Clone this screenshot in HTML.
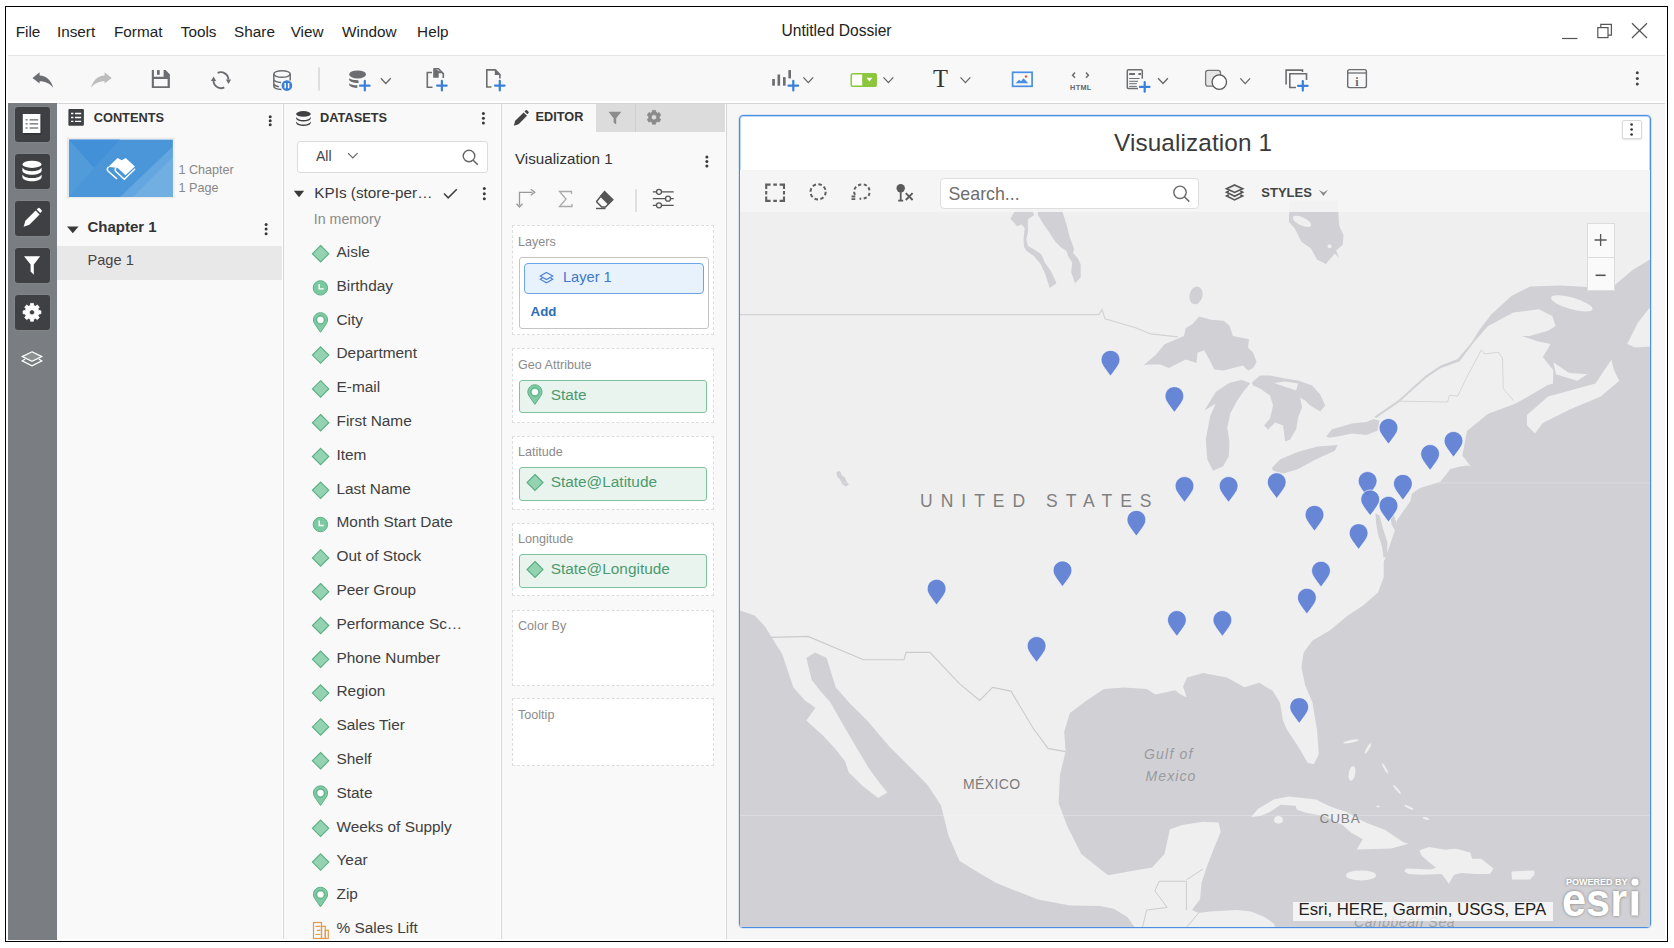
<!DOCTYPE html>
<html><head><meta charset="utf-8"><title>Untitled Dossier</title>
<style>*{box-sizing:border-box;margin:0;padding:0}
html,body{width:1674px;height:948px;overflow:hidden;background:#fff;font-family:"Liberation Sans",sans-serif;color:#333}
.a{position:absolute}
.t{position:absolute;white-space:nowrap}
.ov{position:absolute;left:0;top:0}
#win{position:absolute;left:5px;top:6px;width:1663px;height:936px;border:1px solid #000;pointer-events:none}
</style></head><body>
<div class="a" style="left:8px;top:55px;width:1657px;height:49px;background:#f8f8f8;border-top:1px solid #e4e4e4;border-bottom:1px solid #d6d6d6;box-shadow:inset 0 -2px 0 #fff"></div>
<div class="a" style="left:8px;top:103px;width:49px;height:837px;background:#7a7e82"></div>
<div class="a" style="left:15px;top:107px;width:35px;height:35px;border-radius:3px;background:#3f4043;box-shadow:0 0 0 0.5px #85888b"></div>
<div class="a" style="left:15px;top:154px;width:35px;height:35px;border-radius:3px;background:#3f4043;box-shadow:0 0 0 0.5px #85888b"></div>
<div class="a" style="left:15px;top:201px;width:35px;height:35px;border-radius:3px;background:#3f4043;box-shadow:0 0 0 0.5px #85888b"></div>
<div class="a" style="left:15px;top:248px;width:35px;height:35px;border-radius:3px;background:#3f4043;box-shadow:0 0 0 0.5px #85888b"></div>
<div class="a" style="left:15px;top:295px;width:35px;height:35px;border-radius:3px;background:#3f4043;box-shadow:0 0 0 0.5px #85888b"></div>
<div class="a" style="left:57px;top:104px;width:227px;height:835px;background:#f9f9f9;border-right:1px solid #d6d6d6;box-shadow:inset -1px 0 0 #fff"></div>
<div class="a" style="left:57px;top:246px;width:225px;height:34px;background:#e8e8e8"></div>
<div class="a" style="left:284px;top:104px;width:218px;height:835px;background:#f9f9f9;border-right:1px solid #d6d6d6;box-shadow:inset -1px 0 0 #fff"></div>
<div class="a" style="left:296.5px;top:140.5px;width:191px;height:32px;background:#fff;border:1px solid #dcdcdc;border-radius:3px"></div>
<div class="a" style="left:502px;top:104px;width:225px;height:835px;background:#f9f9f9;border-right:1px solid #d4d4d4;box-shadow:inset -1px 0 0 #fff"></div>
<div class="a" style="left:596px;top:104px;width:129px;height:28px;background:#dcdcdc"></div>
<div class="a" style="left:635px;top:104px;width:1px;height:28px;background:#cfcfcf"></div>
<div class="a" style="left:512px;top:225px;width:202px;height:110px;background:#fff;border:1px dashed #dddddd"></div>
<div class="a" style="left:512px;top:348px;width:202px;height:75px;background:#fff;border:1px dashed #dddddd"></div>
<div class="a" style="left:512px;top:436px;width:202px;height:74px;background:#fff;border:1px dashed #dddddd"></div>
<div class="a" style="left:512px;top:523px;width:202px;height:73px;background:#fff;border:1px dashed #dddddd"></div>
<div class="a" style="left:512px;top:610px;width:202px;height:76px;background:#fff;border:1px dashed #dddddd"></div>
<div class="a" style="left:512px;top:698px;width:202px;height:68px;background:#fff;border:1px dashed #dddddd"></div>
<div class="a" style="left:519px;top:257px;width:190px;height:72px;background:#fff;border:1px solid #c4c4c4;border-radius:3px"></div>
<div class="a" style="left:524px;top:262.5px;width:180px;height:31.5px;background:#e8f2fd;border:1px solid #6aa4ea;border-radius:4px"></div>
<div class="a" style="left:518.5px;top:379.5px;width:188.5px;height:33.5px;background:#eaf4ef;border:1px solid #7ec39e;border-radius:3px"></div>
<div class="a" style="left:518.5px;top:467px;width:188.5px;height:33.5px;background:#eaf4ef;border:1px solid #7ec39e;border-radius:3px"></div>
<div class="a" style="left:518.5px;top:554px;width:188.5px;height:33.5px;background:#eaf4ef;border:1px solid #7ec39e;border-radius:3px"></div>
<div class="a" style="left:727px;top:104px;width:938px;height:835px;background:#f6f6f6"></div>
<div class="a" style="left:739px;top:115px;width:912px;height:813px;border:1px solid #4a8fe3;box-shadow:inset 0 0 0 1px rgba(74,143,227,0.35),0 0 0 0.6px rgba(74,143,227,0.3);border-radius:4px;background:#fff;overflow:hidden"></div>
<svg class="a" style="left:740px;top:169.6px" width="910" height="757.4" viewBox="740 169.6 910 757.4"><rect x="700" y="150" width="1000" height="800" fill="#efefef"/><path d="M738.0 609.5L754.6 615.0L765.0 626.0L771.2 636.0L782.3 653.8L787.0 668.0L793.4 687.0L805.0 700.0L815.5 707.3L806.3 720.2L822.9 735.0L835.0 748.0L845.0 760.8L848.7 771.9L862.0 785.0L878.2 797.7L887.4 792.2L880.0 783.0L869.0 768.2L857.0 748.0L845.0 727.6L830.3 701.8L820.0 690.0L811.8 679.6L806.3 657.5L815.0 652.0L826.6 657.5L835.8 687.0L850.0 703.0L867.2 720.2L889.3 746.0L911.4 768.2L928.0 785.0L941.0 805.0L948.3 834.6L959.4 860.4L980.0 873.0L996.3 882.6L1038.0 899.2L1070.0 905.0L1100.0 905.6L1113.7 908.4L1127.4 916.6L1137.0 930.0L738.0 930.0Z" fill="#d1d1d5" />
<path d="M1065.6 751.2L1064.2 731.2L1069.9 712.7L1087.0 699.9L1104.0 688.5L1124.0 687.0L1146.8 688.5L1155.4 694.2L1175.3 689.9L1179.5 693.4L1186.7 697.0L1183.0 686.0L1187.0 677.1L1203.2 672.7L1226.8 677.1L1244.5 686.8L1259.3 682.3L1272.6 690.4L1280.0 702.3L1283.0 720.0L1286.4 728.4L1297.8 745.5L1307.8 762.6L1313.8 763.9L1318.8 753.7L1317.1 730.1L1312.5 702.3L1305.1 684.5L1301.4 666.8L1303.6 652.0L1312.5 640.2L1330.0 629.9L1347.5 615.3L1362.8 605.3L1378.0 592.0L1383.7 576.8L1383.7 561.6L1389.4 546.4L1395.0 529.3L1397.0 519.8L1410.3 500.8L1412.0 493.0L1420.0 487.6L1440.3 481.3L1450.4 468.6L1460.0 466.0L1469.0 465.0L1471.5 467.1L1462.4 455.0L1467.0 430.6L1488.1 413.4L1515.1 403.3L1530.3 394.9L1547.2 384.8L1553.0 383.0L1553.3 369.8L1542.8 356.6L1550.7 343.5L1537.5 340.8L1521.7 335.5L1529.6 335.5L1548.0 330.3L1555.6 325.7L1552.3 315.6L1538.7 308.8L1513.4 312.2L1488.1 325.7L1474.6 340.9L1459.4 361.1L1441.0 367.5L1426.0 377.5L1399.0 401.8L1376.0 417.8L1374.5 416.0L1398.4 399.8L1425.4 375.3L1440.6 365.0L1457.7 358.6L1471.2 342.6L1479.7 329.0L1491.5 313.9L1511.7 295.3L1530.3 286.0L1560.0 285.2L1587.6 286.7L1614.0 285.4L1632.5 269.6L1652.0 258.0L1652.0 930.0L1275.6 930.0L1274.2 923.5L1264.6 916.6L1250.9 911.1L1237.2 909.7L1209.7 911.1L1198.8 912.5L1191.9 909.7L1200.1 898.8L1201.5 882.3L1207.0 865.8L1213.9 848.0L1220.7 831.6L1218.7 822.0L1202.9 821.3L1182.3 824.7L1170.0 828.8L1167.2 841.2L1164.5 853.5L1152.1 867.2L1134.3 870.0L1108.2 874.8L1100.0 868.6L1081.3 853.7L1067.0 825.2L1058.5 802.5L1060.0 774.0Z" fill="#d1d1d5" />
<path d="M1652.0 305.0L1648.3 309.2L1637.8 322.3L1627.2 343.5L1635.0 347.0L1652.0 346.0Z" fill="#efefef" />
<ellipse cx="1571.8" cy="303" rx="21.5" ry="5.8" transform="rotate(16 1571.8 303)" fill="#efefef"/>
<path d="M1553.3 361.9L1569.2 372.5L1587.6 373.8L1577.0 380.4L1556.0 373.8Z" fill="#efefef" />
<path d="M1527.0 414.7L1548.0 396.2L1566.5 391.0L1595.5 383.0L1606.1 367.2L1611.4 359.3L1614.0 369.8L1619.3 380.4L1600.8 396.2L1569.2 409.4L1542.8 422.6L1534.9 433.2L1527.0 425.2Z" fill="#efefef" />
<path d="M1251.1 816.5L1258.2 808.4L1273.4 799.2L1288.7 796.2L1316.1 799.2L1326.2 804.3L1336.4 808.4L1346.5 811.4L1356.7 817.5L1366.8 822.6L1385.1 829.7L1403.4 841.9L1408.5 843.4L1391.2 848.0L1356.7 849.0L1362.8 838.8L1351.6 832.7L1342.5 824.6L1324.2 815.5L1305.9 812.4L1296.8 809.4L1295.8 805.3L1280.5 804.3L1270.4 811.4L1260.2 815.5Z" fill="#efefef" />
<ellipse cx="1278.5" cy="819.5" rx="4.5" ry="3.8" fill="#efefef"/>
<path d="M1404.0 870.8L1406.6 868.2L1430.8 869.0L1436.2 867.3L1429.0 861.9L1421.9 855.6L1419.2 850.2L1429.0 846.6L1445.2 849.3L1455.9 848.4L1470.3 852.0L1472.1 858.3L1481.0 858.3L1493.6 868.2L1490.0 873.5L1475.6 873.5L1461.3 872.6L1454.1 874.4L1448.8 883.4L1445.2 878.0L1441.6 873.5L1421.9 874.4L1408.4 873.5Z" fill="#efefef" />
<ellipse cx="1361" cy="875" rx="15" ry="5" fill="#efefef"/>
<path d="M1511.5 871.0L1534.0 870.0L1534.5 874.0L1530.0 879.0L1512.0 879.0Z" fill="#efefef" />
<ellipse cx="1351" cy="741" rx="8" ry="1.4" transform="rotate(-12 1351 741)" fill="#efefef"/>
<ellipse cx="1368" cy="748" rx="1.4" ry="6" transform="rotate(30 1368 748)" fill="#efefef"/>
<ellipse cx="1352" cy="773" rx="3.2" ry="7.5" transform="rotate(10 1352 773)" fill="#efefef"/>
<ellipse cx="1385" cy="768" rx="1.1" ry="6" transform="rotate(-30 1385 768)" fill="#efefef"/>
<ellipse cx="1397" cy="789" rx="1.1" ry="6" transform="rotate(-40 1397 789)" fill="#efefef"/>
<ellipse cx="1409" cy="807" rx="5" ry="1.1" transform="rotate(25 1409 807)" fill="#efefef"/>
<ellipse cx="1426" cy="818" rx="3.5" ry="1.1" transform="rotate(15 1426 818)" fill="#efefef"/>
<ellipse cx="1378" cy="806" rx="1.6" ry="0.9" transform="rotate(0 1378 806)" fill="#efefef"/>
<path d="M1143.4 365.0L1156.1 354.0L1164.5 343.9L1184.0 335.5L1185.7 327.9L1192.4 323.6L1199.2 316.0L1211.0 319.4L1223.6 320.3L1229.5 325.3L1232.9 335.5L1249.0 338.8L1248.1 347.3L1253.2 352.3L1256.6 361.6L1253.2 367.5L1248.1 370.0L1243.0 365.0L1223.6 370.0L1214.4 369.2L1209.3 359.1L1204.2 349.8L1197.5 352.3L1196.6 362.5L1185.7 359.1L1168.8 367.5L1160.3 364.2L1147.7 364.2Z" fill="#d1d1d5" />
<path d="M1204.4 410.1L1215.8 391.5L1228.7 382.9L1241.6 379.3L1250.3 382.9L1243.1 391.5L1237.3 400.1L1230.2 413.0L1227.3 427.3L1229.5 441.7L1228.7 456.0L1223.0 466.1L1213.0 470.4L1207.2 458.9L1205.8 438.8L1210.1 415.9L1215.8 403.0Z" fill="#d1d1d5" />
<path d="M1252.0 382.0L1260.0 375.0L1270.0 375.0L1285.1 378.0L1298.1 380.0L1312.1 385.0L1320.2 394.1L1325.2 405.1L1320.2 411.1L1310.1 405.1L1305.1 400.1L1300.1 397.1L1302.1 407.1L1298.1 417.1L1296.1 429.1L1290.1 439.1L1285.1 441.2L1283.1 425.1L1275.1 422.1L1268.1 429.1L1264.0 425.1L1270.0 418.1L1273.1 405.1L1270.0 395.1L1260.0 388.0L1253.0 385.0Z" fill="#d1d1d5" />
<path d="M1274.1 382.5L1285.1 381.0L1298.1 383.0L1296.1 390.0L1284.1 386.0Z" fill="#efefef" />
<path d="M1271.8 467.5L1280.4 458.9L1297.6 451.7L1317.6 446.0L1337.7 444.6L1334.8 450.3L1316.2 458.9L1297.6 468.9L1283.2 473.2L1273.2 470.4Z" fill="#d1d1d5" />
<path d="M1326.2 436.0L1332.0 428.8L1352.0 423.0L1366.4 421.6L1373.5 418.7L1379.3 420.2L1377.8 430.2L1366.4 434.5L1352.0 433.1L1337.7 436.0L1329.1 437.4Z" fill="#d1d1d5" />
<path d="M1036.0 195.0L1061.0 195.0L1062.7 212.1L1066.5 224.0L1069.3 235.4L1074.1 248.7L1073.1 252.5L1077.9 258.2L1080.7 263.9L1080.7 277.2L1075.0 282.9L1071.2 271.5L1072.2 262.0L1068.4 256.3L1066.5 250.6L1060.8 246.8L1055.1 241.1L1048.4 230.6L1043.7 224.0L1038.0 214.5Z" fill="#d1d1d5" />
<path d="M1010.4 218.3L1018.0 205.0L1031.3 205.0L1034.0 214.5L1027.8 219.2L1028.0 230.6L1026.3 239.2L1028.0 245.5L1035.0 249.5L1041.5 254.0L1044.8 262.0L1051.5 271.5L1056.5 282.9L1049.8 287.6L1045.0 273.0L1040.5 263.5L1034.0 255.5L1026.5 250.5L1024.0 246.0L1023.5 239.2L1024.7 227.8L1021.8 224.0L1017.1 225.9Z" fill="#d1d1d5" />
<ellipse cx="1196" cy="295" rx="6.5" ry="9" transform="rotate(15 1196 295)" fill="#d1d1d5"/>
<path d="M1289.6 200.0L1337.6 200.0L1339.1 225.1L1343.5 234.7L1342.8 244.3L1336.1 250.2L1339.1 257.6L1334.7 253.2L1325.8 263.5L1316.9 259.1L1311.0 248.0L1301.4 241.4L1294.8 228.1L1288.9 221.4Z" fill="#d1d1d5" />
<ellipse cx="1302" cy="221" rx="10" ry="4" transform="rotate(25 1302 221)" fill="#efefef"/>
<circle cx="1329.5" cy="245.8" r="2" fill="#efefef"/>
<path d="M836.5 471.5L840.0 470.5L842.0 475.0L845.0 477.0L846.5 481.0L849.0 484.0L846.0 486.0L842.0 483.5L840.0 479.0L837.0 476.0Z" fill="#d1d1d5" />
<path d="M1375.5 513.0L1379.5 515.0L1383.0 528.0L1387.5 542.0L1387.0 556.0L1383.5 557.0L1382.0 546.0L1378.0 534.0L1376.0 522.0Z" fill="#d1d1d5" />
<path d="M1390.0 513.0L1394.0 515.0L1398.5 528.0L1395.5 531.0L1391.5 524.0Z" fill="#d1d1d5" />
<path d="M740.0 314.2L1098.7 314.2L1102.0 309.2L1105.0 318.3L1135.5 327.4L1150.7 333.5L1178.0 336.5" fill="none" stroke="#d2d2d2" stroke-width="1.1" />
<path d="M771.0 637.0L808.0 636.0L863.5 659.3L904.0 659.3L906.0 652.0L929.9 652.0L959.4 683.3L979.7 700.0L992.6 687.0L1011.0 690.7L1033.0 727.6L1048.0 748.0L1065.6 751.2" fill="none" stroke="#cbcbcb" stroke-width="1.1" />
<path d="M1398.7 400.8L1447.6 401.6L1449.3 394.9L1457.7 395.7L1466.2 378.0L1481.4 349.3L1484.7 353.5L1498.2 351.8L1502.5 357.7L1503.3 388.1L1513.4 400.0" fill="none" stroke="#d6d6d6" stroke-width="1" />
<path d="M1142.5 927.0L1146.6 909.7L1167.2 907.0L1154.9 890.5L1159.0 880.9L1186.4 880.9L1186.4 909.7" fill="none" stroke="#cccccc" stroke-width="1" />
<path d="M1186.4 879.6L1202.9 868.6" fill="none" stroke="#cccccc" stroke-width="1" />
<path d="M1198.8 912.5L1186.4 927.0" fill="none" stroke="#cccccc" stroke-width="1" />
<path d="M740 482.5H1650M740 815H1650" stroke="#f6f6f6" stroke-width="0.8" opacity="0.35"/></svg>
<div class="t" style="left:920px;top:491px;font-size:17.5px;line-height:20px;color:#808080;letter-spacing:8.0px">UNITED STATES</div>
<div class="t" style="left:963px;top:776px;font-size:14px;line-height:17px;color:#7c7c7c;letter-spacing:0.4px">MÉXICO</div>
<div class="t" style="left:1319.5px;top:810px;font-size:13.5px;line-height:17px;color:#808080;letter-spacing:0.9px">CUBA</div>
<div class="t" style="left:1144px;top:746px;font-size:14px;line-height:17px;color:#9a9a9e;font-style:italic;letter-spacing:1.2px">Gulf of</div>
<div class="t" style="left:1145.5px;top:768px;font-size:14px;line-height:17px;color:#9a9a9e;font-style:italic;letter-spacing:1.1px">Mexico</div>
<svg class="a" style="left:0;top:0" width="1674" height="948"><g><path d="M1110.5 376.0C1108.5 373.4 1103.9 367.5 1102.1 364.0A9.4 9.4 0 1 1 1118.9 364.0C1117.1 367.5 1112.5 373.4 1110.5 376.0Z" fill="#6282d4" stroke="#fff" stroke-width="0.8" stroke-opacity="0.8" fill-opacity="0.97"/>
<path d="M1174.4 412.3C1172.4 409.7 1167.8 403.8 1166.0 400.3A9.4 9.4 0 1 1 1182.8 400.3C1181.0 403.8 1176.4 409.7 1174.4 412.3Z" fill="#6282d4" stroke="#fff" stroke-width="0.8" stroke-opacity="0.8" fill-opacity="0.97"/>
<path d="M1184.5 502.2C1182.5 499.6 1177.9 493.7 1176.1 490.2A9.4 9.4 0 1 1 1192.9 490.2C1191.1 493.7 1186.5 499.6 1184.5 502.2Z" fill="#6282d4" stroke="#fff" stroke-width="0.8" stroke-opacity="0.8" fill-opacity="0.97"/>
<path d="M1228.6 502.2C1226.6 499.6 1222.0 493.7 1220.2 490.2A9.4 9.4 0 1 1 1237.0 490.2C1235.2 493.7 1230.6 499.6 1228.6 502.2Z" fill="#6282d4" stroke="#fff" stroke-width="0.8" stroke-opacity="0.8" fill-opacity="0.97"/>
<path d="M1276.7 498.4C1274.7 495.8 1270.1 489.9 1268.3 486.4A9.4 9.4 0 1 1 1285.1 486.4C1283.3 489.9 1278.7 495.8 1276.7 498.4Z" fill="#6282d4" stroke="#fff" stroke-width="0.8" stroke-opacity="0.8" fill-opacity="0.97"/>
<path d="M1136.4 536.0C1134.4 533.4 1129.8 527.5 1128.0 524.0A9.4 9.4 0 1 1 1144.8 524.0C1143.0 527.5 1138.4 533.4 1136.4 536.0Z" fill="#6282d4" stroke="#fff" stroke-width="0.8" stroke-opacity="0.8" fill-opacity="0.97"/>
<path d="M1388.5 444.1C1386.5 441.5 1381.9 435.6 1380.1 432.1A9.4 9.4 0 1 1 1396.9 432.1C1395.1 435.6 1390.5 441.5 1388.5 444.1Z" fill="#6282d4" stroke="#fff" stroke-width="0.8" stroke-opacity="0.8" fill-opacity="0.97"/>
<path d="M1430.1 470.2C1428.1 467.6 1423.5 461.7 1421.7 458.2A9.4 9.4 0 1 1 1438.5 458.2C1436.7 461.7 1432.1 467.6 1430.1 470.2Z" fill="#6282d4" stroke="#fff" stroke-width="0.8" stroke-opacity="0.8" fill-opacity="0.97"/>
<path d="M1453.5 457.1C1451.5 454.5 1446.9 448.6 1445.1 445.1A9.4 9.4 0 1 1 1461.9 445.1C1460.1 448.6 1455.5 454.5 1453.5 457.1Z" fill="#6282d4" stroke="#fff" stroke-width="0.8" stroke-opacity="0.8" fill-opacity="0.97"/>
<path d="M1367.6 497.2C1365.6 494.6 1361.0 488.7 1359.2 485.2A9.4 9.4 0 1 1 1376.0 485.2C1374.2 488.7 1369.6 494.6 1367.6 497.2Z" fill="#6282d4" stroke="#fff" stroke-width="0.8" stroke-opacity="0.8" fill-opacity="0.97"/>
<path d="M1370.2 515.6C1368.2 513.0 1363.6 507.1 1361.8 503.6A9.4 9.4 0 1 1 1378.6 503.6C1376.8 507.1 1372.2 513.0 1370.2 515.6Z" fill="#6282d4" stroke="#fff" stroke-width="0.8" stroke-opacity="0.8" fill-opacity="0.97"/>
<path d="M1402.9 500.0C1400.9 497.4 1396.3 491.5 1394.5 488.0A9.4 9.4 0 1 1 1411.3 488.0C1409.5 491.5 1404.9 497.4 1402.9 500.0Z" fill="#6282d4" stroke="#fff" stroke-width="0.8" stroke-opacity="0.8" fill-opacity="0.97"/>
<path d="M1388.5 521.9C1386.5 519.3 1381.9 513.4 1380.1 509.9A9.4 9.4 0 1 1 1396.9 509.9C1395.1 513.4 1390.5 519.3 1388.5 521.9Z" fill="#6282d4" stroke="#fff" stroke-width="0.8" stroke-opacity="0.8" fill-opacity="0.97"/>
<path d="M1314.5 531.0C1312.5 528.4 1307.9 522.5 1306.1 519.0A9.4 9.4 0 1 1 1322.9 519.0C1321.1 522.5 1316.5 528.4 1314.5 531.0Z" fill="#6282d4" stroke="#fff" stroke-width="0.8" stroke-opacity="0.8" fill-opacity="0.97"/>
<path d="M1358.6 549.3C1356.6 546.7 1352.0 540.8 1350.2 537.3A9.4 9.4 0 1 1 1367.0 537.3C1365.2 540.8 1360.6 546.7 1358.6 549.3Z" fill="#6282d4" stroke="#fff" stroke-width="0.8" stroke-opacity="0.8" fill-opacity="0.97"/>
<path d="M1321.0 586.9C1319.0 584.3 1314.4 578.4 1312.6 574.9A9.4 9.4 0 1 1 1329.4 574.9C1327.6 578.4 1323.0 584.3 1321.0 586.9Z" fill="#6282d4" stroke="#fff" stroke-width="0.8" stroke-opacity="0.8" fill-opacity="0.97"/>
<path d="M1306.9 613.9C1304.9 611.3 1300.3 605.4 1298.5 601.9A9.4 9.4 0 1 1 1315.3 601.9C1313.5 605.4 1308.9 611.3 1306.9 613.9Z" fill="#6282d4" stroke="#fff" stroke-width="0.8" stroke-opacity="0.8" fill-opacity="0.97"/>
<path d="M936.6 604.9C934.6 602.3 930.0 596.4 928.2 592.9A9.4 9.4 0 1 1 945.0 592.9C943.2 596.4 938.6 602.3 936.6 604.9Z" fill="#6282d4" stroke="#fff" stroke-width="0.8" stroke-opacity="0.8" fill-opacity="0.97"/>
<path d="M1062.5 586.6C1060.5 584.0 1055.9 578.1 1054.1 574.6A9.4 9.4 0 1 1 1070.9 574.6C1069.1 578.1 1064.5 584.0 1062.5 586.6Z" fill="#6282d4" stroke="#fff" stroke-width="0.8" stroke-opacity="0.8" fill-opacity="0.97"/>
<path d="M1036.6 662.2C1034.6 659.6 1030.0 653.7 1028.2 650.2A9.4 9.4 0 1 1 1045.0 650.2C1043.2 653.7 1038.6 659.6 1036.6 662.2Z" fill="#6282d4" stroke="#fff" stroke-width="0.8" stroke-opacity="0.8" fill-opacity="0.97"/>
<path d="M1176.9 636.2C1174.9 633.6 1170.3 627.7 1168.5 624.2A9.4 9.4 0 1 1 1185.3 624.2C1183.5 627.7 1178.9 633.6 1176.9 636.2Z" fill="#6282d4" stroke="#fff" stroke-width="0.8" stroke-opacity="0.8" fill-opacity="0.97"/>
<path d="M1222.4 636.2C1220.4 633.6 1215.8 627.7 1214.0 624.2A9.4 9.4 0 1 1 1230.8 624.2C1229.0 627.7 1224.4 633.6 1222.4 636.2Z" fill="#6282d4" stroke="#fff" stroke-width="0.8" stroke-opacity="0.8" fill-opacity="0.97"/>
<path d="M1299.2 723.3C1297.2 720.7 1292.6 714.8 1290.8 711.3A9.4 9.4 0 1 1 1307.6 711.3C1305.8 714.8 1301.2 720.7 1299.2 723.3Z" fill="#6282d4" stroke="#fff" stroke-width="0.8" stroke-opacity="0.8" fill-opacity="0.97"/></g></svg>
<div class="a" style="left:740px;top:169.6px;width:910px;height:42.4px;background:rgba(246,246,246,0.88)"></div>
<div class="a" style="left:940.3px;top:177.9px;width:258.5px;height:31.5px;background:#fff;border:1px solid #dedede;border-radius:4px"></div>
<div class="a" style="left:1587px;top:222.5px;width:27.5px;height:68.5px;background:#fafafa;border:1px solid #dcdcdc"></div>
<div class="a" style="left:1587px;top:257px;width:27.5px;height:1px;background:#dcdcdc"></div>
<div class="a" style="left:1621.5px;top:119.7px;width:20px;height:19.5px;background:#fff;border:1px solid #dadada;border-radius:2px;box-shadow:0 1px 2px rgba(0,0,0,0.12)"></div>
<div class="a" style="left:741px;top:169.6px;width:908px;height:757.2px;overflow:hidden"><div class="t" style="left:613px;top:744.5px;font-size:14px;line-height:17px;color:#a2a2a6;font-style:italic;letter-spacing:0.6px">Caribbean Sea</div></div>
<div class="a" style="left:1293px;top:902.2px;width:260px;height:18.4px;background:rgba(255,255,255,0.75)"></div>
<svg class="ov" width="1674" height="948" viewBox="0 0 1674 948">
<path d="M1562 38.5h15.5" stroke="#555" stroke-width="1.2"/>
<rect x="1597.8" y="27.6" width="10.2" height="10" fill="none" stroke="#555" stroke-width="1.2"/>
<path d="M1600.8 27.6v-3.2h10.6v10.8h-3.4" fill="none" stroke="#555" stroke-width="1.2"/>
<path d="M1632 23.3l15 14.7M1647 23.3l-15 14.7" stroke="#555" stroke-width="1.2"/>
<path d="M32.5 77.9L39.6 72.3V75.6C46.5 75.9 51.2 80.4 53.2 87.8C49.8 83.6 45.5 81.3 39.6 81.3V83.5Z" fill="#6b6d70"/>
<path transform="translate(144.2 0) scale(-1 1)" d="M32.5 77.9L39.6 72.3V75.6C46.5 75.9 51.2 80.4 53.2 87.8C49.8 83.6 45.5 81.3 39.6 81.3V83.5Z" fill="#bdbdbd"/>
<path fill-rule="evenodd" d="M151.8 70.1H165.6L169.9 74.4V87.9H151.8ZM153.9 70.1H163.6V76.7H153.9ZM153.9 78.9H167.6V86.3H153.9Z" fill="#6b6d70"/>
<rect x="157" y="70.1" width="2.7" height="4.7" fill="#6b6d70"/>
<path d="M217.6 72.9A7.6 7.6 0 0 1 228.4 79.6" fill="none" stroke="#6b6d70" stroke-width="1.9"/>
<path d="M225.9 79.6H231.1L228.5 84Z" fill="#6b6d70"/>
<path d="M224.3 87.4A7.6 7.6 0 0 1 213.5 80.8" fill="none" stroke="#6b6d70" stroke-width="1.9"/>
<path d="M210.9 80.9H216.1L213.6 76.6Z" fill="#6b6d70"/>
<ellipse cx="282" cy="74" rx="8.2" ry="3.3" fill="none" stroke="#6b6d70" stroke-width="1.5"/>
<path d="M273.8 74V86C273.8 88 277 89.3 281.5 89.5M290.2 74V80.5M273.8 79.5C274.5 81.2 277.5 82.3 281 82.5M273.8 84.2C274.5 85.6 276.5 86.4 279 86.7" fill="none" stroke="#6b6d70" stroke-width="1.5"/>
<circle cx="286.9" cy="85.6" r="5.3" fill="#3a80d8"/>
<path d="M285.2 83V88.2M288.6 83V88.2" stroke="#fff" stroke-width="1.5"/>
<path d="M319 67.5V90.5" stroke="#cfcfcf" stroke-width="1.3"/>
<ellipse cx="357.6" cy="74.4" rx="8.4" ry="4" fill="#6b6d70"/>
<path d="M349.2 78.6C350 81.5 353.5 82.9 358.6 82.9L357.6 80.2C353.5 80.1 350.6 79.6 349.2 78.6Z" fill="#6b6d70"/>
<path d="M349.2 78.4V80.2C350.8 82 354 82.9 358.3 83.1L358.6 80.6C354 80.5 350.6 79.8 349.2 78.4Z" fill="#6b6d70"/>
<path d="M349.2 83.2V85.2C350.8 87 354 87.9 357.3 88L357.4 85.3C353.6 85.2 350.6 84.6 349.2 83.2Z" fill="#6b6d70"/>
<path d="M360.0 85.7H369.6M364.8 80.9V90.5" stroke="#3a80d8" stroke-width="2.2" stroke-linecap="round"/>
<path d="M380.90000000000003 78.30000000000001L385.8 83.5L390.7 78.30000000000001" fill="none" stroke="#666" stroke-width="1.3"/>
<path d="M432 72.5H427.3V87.2H432.5" fill="none" stroke="#6b6d70" stroke-width="1.6"/>
<path d="M434 68.8H438.5L443.3 73.6V78" fill="none" stroke="#6b6d70" stroke-width="1.6"/>
<path d="M433.2 68V77.8H438.7V73.2H443.5Z" fill="#6b6d70"/>
<path d="M437.09999999999997 85.6H446.7M441.9 80.8V90.39999999999999" stroke="#3a80d8" stroke-width="2.2" stroke-linecap="round"/>
<path d="M491.5 87H486.8V69.9H495.3L499.9 74.5V78.5" fill="none" stroke="#6b6d70" stroke-width="1.6"/>
<path d="M494.8 69.4V74.9H500.4Z" fill="#6b6d70"/>
<path d="M495.0 85.6H504.6M499.8 80.8V90.39999999999999" stroke="#3a80d8" stroke-width="2.2" stroke-linecap="round"/>
<rect x="772.2" y="79" width="2.699999999999932" height="6.700000000000003" fill="#6b6d70"/>
<rect x="777.5" y="74.5" width="2.6000000000000227" height="11.200000000000003" fill="#6b6d70"/>
<rect x="783" y="77.1" width="2.6000000000000227" height="8.600000000000009" fill="#6b6d70"/>
<rect x="788.4" y="70.1" width="2.6000000000000227" height="8.300000000000011" fill="#6b6d70"/>
<path d="M788.5 85.7H798.0999999999999M793.3 80.9V90.5" stroke="#3a80d8" stroke-width="2.2" stroke-linecap="round"/>
<path d="M803.4 77.4L808.3 82.6L813.1999999999999 77.4" fill="none" stroke="#666" stroke-width="1.3"/>
<rect x="851.2" y="73.7" width="25" height="12.5" rx="1.8" fill="#fff" stroke="#8cc63e" stroke-width="1.5"/>
<path d="M862.2 72.9H874.7A2.5 2.5 0 0 1 877 75.4V84.5A2.5 2.5 0 0 1 874.7 87H862.2Z" fill="#8cc63e"/>
<path d="M866.6 77.7H872.2L869.4 81.5Z" fill="#fff"/>
<path d="M883.5 77.4L888.4 82.6L893.3 77.4" fill="none" stroke="#666" stroke-width="1.3"/>
<text x="940.6" y="87.2" font-family="Liberation Serif" font-size="24.5" text-anchor="middle" fill="#333">T</text>
<path d="M960.5 77.4L965.4 82.6L970.3 77.4" fill="none" stroke="#666" stroke-width="1.3"/>
<rect x="1012.6" y="72.3" width="19.5" height="14" fill="none" stroke="#4a90e2" stroke-width="1.7"/>
<path d="M1015.6 83.2L1019 79.8L1021 81.3L1023.5 78.3L1028.4 83.2Z" fill="#4a90e2"/>
<circle cx="1026" cy="76.5" r="1.2" fill="#e8553e"/>
<path d="M1075 72.6L1072.6 75.2L1075 77.8M1086 72.6L1088.4 75.2L1086 77.8" fill="none" stroke="#6b6d70" stroke-width="1.5"/>
<text x="1080.8" y="89.8" font-family="Liberation Sans" font-weight="bold" font-size="7.3" text-anchor="middle" fill="#666" letter-spacing="0.3">HTML</text>
<path d="M1138 88.6H1128.3A1 1 0 0 1 1127.3 87.6V70.7A1 1 0 0 1 1128.3 69.7H1141.3A1 1 0 0 1 1142.3 70.7V78.7" fill="none" stroke="#6b6d70" stroke-width="1.5"/>
<path d="M1129.2 73.9H1135M1138.4 73.9H1141" stroke="#6b6d70" stroke-width="2"/>
<path d="M1129.2 78.5H1139.6M1129.2 81.3H1138M1129.2 83.7H1136.8M1129.2 86.4H1136.8" stroke="#6b6d70" stroke-width="1"/>
<path d="M1139.9 86.9H1149.5M1144.7 82.10000000000001V91.7" stroke="#3a80d8" stroke-width="2.2" stroke-linecap="round"/>
<path d="M1158.1 78.30000000000001L1163 83.5L1167.9 78.30000000000001" fill="none" stroke="#666" stroke-width="1.3"/>
<rect x="1205.6" y="70.3" width="14.9" height="15.9" rx="2.5" fill="#e6e6e6" stroke="#777" stroke-width="1.3"/>
<circle cx="1219.3" cy="82.1" r="7.2" fill="#fff" stroke="#555" stroke-width="1.3"/>
<path d="M1240.3 78.4L1245.2 83.6L1250.1000000000001 78.4" fill="none" stroke="#666" stroke-width="1.3"/>
<path d="M1286.1 84.5V70.1H1302.5V72" fill="none" stroke="#6b6d70" stroke-width="1.6"/>
<path d="M1296 87.5H1289.8V73.8H1306.5V80" fill="none" stroke="#6b6d70" stroke-width="1.6"/>
<path d="M1298.0 85.8H1307.6M1302.8 81.0V90.6" stroke="#3a80d8" stroke-width="2.2" stroke-linecap="round"/>
<rect x="1347.7" y="69.6" width="18.7" height="18" rx="1.8" fill="none" stroke="#6b6d70" stroke-width="1.4"/>
<path d="M1347.7 73H1366.4" stroke="#6b6d70" stroke-width="1.3"/>
<text x="1357" y="86.3" font-family="Liberation Serif" font-size="12" font-weight="bold" text-anchor="middle" fill="#6b6d70">i</text>
<circle cx="1637.3" cy="72.8" r="1.5" fill="#444"/>
<circle cx="1637.3" cy="78.5" r="1.5" fill="#444"/>
<circle cx="1637.3" cy="84.1" r="1.5" fill="#444"/>
<rect x="24" y="115.5" width="17.5" height="19" fill="#222" opacity="0.45"/>
<rect x="22.8" y="114" width="17.6" height="19" fill="#fff"/>
<path d="M25.6 119.9H27.6M29.6 119.9H38.2" stroke="#3f4044" stroke-width="1"/>
<path d="M25.6 123.9H27.6M29.6 123.9H38.2" stroke="#3f4044" stroke-width="1"/>
<path d="M25.6 128H27.6M29.6 128H38.2" stroke="#3f4044" stroke-width="1"/>
<g fill="#fff">
<ellipse cx="32" cy="164.3" rx="9.6" ry="3.6"/>
<path d="M22.4 167.6C23.5 170 27.3 171.2 32 171.2S40.5 170 41.6 167.6V171C40.5 173.5 36.7 174.7 32 174.7S23.5 173.5 22.4 171Z"/>
<path d="M22.4 174.4C23.5 176.8 27.3 178 32 178S40.5 176.8 41.6 174.4V177.5C40.5 180 36.7 181.2 32 181.2S23.5 180 22.4 177.5Z"/>
</g>
<path d="M23.6 226.8L25.4 220.8L35.6 210.6L39.6 214.6L29.4 224.8Z" fill="#fff"/>
<path d="M36.6 209.6L38 208.3A1.3 1.3 0 0 1 39.8 208.3L41.5 210A1.3 1.3 0 0 1 41.5 211.8L40.3 213.1Z" fill="#fff"/>
<path d="M24 256.3H40.2L33.8 264.4V274.7L30.6 271.6V264.4Z" fill="#fff"/>
<path fill-rule="evenodd" stroke="#fff" stroke-width="0.8" stroke-linejoin="round" d="M38.67 310.53L40.89 310.87L40.89 313.73L38.67 314.07L37.97 315.76L39.30 317.57L37.27 319.60L35.46 318.27L33.77 318.97L33.43 321.19L30.57 321.19L30.23 318.97L28.54 318.27L26.73 319.60L24.70 317.57L26.03 315.76L25.33 314.07L23.11 313.73L23.11 310.87L25.33 310.53L26.03 308.84L24.70 307.03L26.73 305.00L28.54 306.33L30.23 305.63L30.57 303.41L33.43 303.41L33.77 305.63L35.46 306.33L37.27 305.00L39.30 307.03L37.97 308.84ZM34.6 312.3A2.6 2.6 0 1 0 29.4 312.3A2.6 2.6 0 1 0 34.6 312.3Z" fill="#fff"/>
<path d="M32 351.8L41.8 356.6L32 361.4L22.2 356.6Z" fill="#8e9194" stroke="#fff" stroke-width="1.2"/>
<path d="M25.2 359L22.2 360.9L32 365.8L41.8 360.9L38.8 359" fill="none" stroke="#fff" stroke-width="1.2"/>
<rect x="68.4" y="109.1" width="15.5" height="16.7" rx="1" fill="#3f4044"/>
<path d="M71 113.5H73.4M75 113.5H81.2" stroke="#fff" stroke-width="1.3"/>
<path d="M71 117.5H73.4M75 117.5H81.2" stroke="#fff" stroke-width="1.3"/>
<path d="M71 121.4H73.4M75 121.4H81.2" stroke="#fff" stroke-width="1.3"/>
<circle cx="270.2" cy="116.80" r="1.5" fill="#3a3a3a"/>
<circle cx="270.2" cy="120.80" r="1.5" fill="#3a3a3a"/>
<circle cx="270.2" cy="124.80" r="1.5" fill="#3a3a3a"/>
<rect x="67.5" y="138.3" width="106.5" height="59.5" fill="none" stroke="#e6e6e6" stroke-width="1"/>
<rect x="68.9" y="139.6" width="104" height="57.4" fill="#4a96d9"/>
<path d="M68.9 139.6L94 168L120 139.6Z" fill="#3f8dd6" opacity="0.7"/>
<path d="M68.9 139.6L94 168L68.9 197Z" fill="#5aa0dc" opacity="0.5"/>
<path d="M120 197L172.9 146.5V197Z" fill="#7ab5e4" opacity="0.55"/>
<path d="M133 197L172.9 157V197Z" fill="#8abfe8" opacity="0.35"/>
<path d="M107.2 168L117.6 157.9L121.8 160.3L125.7 157.9L134.9 166.4L125.5 175.3L117.8 168L110 167Z" fill="#fff"/>
<path d="M108 167.5Q106.3 169.3 108.2 171.2L116.6 178.6M115.8 168.3Q114.2 170 116.2 171.8L124.3 179.3L134.7 169.3" fill="none" stroke="#fff" stroke-width="1.4" stroke-linecap="round"/>
<path d="M67 226.4H78.6L72.8 233.2Z" fill="#3a3a3a"/>
<circle cx="266.1" cy="224.40" r="1.5" fill="#3a3a3a"/>
<circle cx="266.1" cy="229.05" r="1.5" fill="#3a3a3a"/>
<circle cx="266.1" cy="233.70" r="1.5" fill="#3a3a3a"/>
<ellipse cx="303.45" cy="113.9" rx="7.35" ry="2.8" fill="#3f4044"/>
<path d="M296.1 116.9C297 119 300 120 303.45 120S310 119 310.8 116.9V118.6C310 120.8 307 121.6 303.45 121.6S297 120.8 296.1 118.6Z" fill="#3f4044"/>
<path d="M296.1 121.4C297 123.5 300 124.5 303.45 124.5S310 123.5 310.8 121.4V123.1C310 125.3 307 126.1 303.45 126.1S297 125.3 296.1 123.1Z" fill="#3f4044"/>
<circle cx="483.4" cy="113.50" r="1.5" fill="#3a3a3a"/>
<circle cx="483.4" cy="118.25" r="1.5" fill="#3a3a3a"/>
<circle cx="483.4" cy="123.00" r="1.5" fill="#3a3a3a"/>
<path d="M348 153.2L352.8 158L357.6 153.2" fill="none" stroke="#666" stroke-width="1.2"/>
<circle cx="469" cy="156" r="5.8" fill="none" stroke="#666" stroke-width="1.4"/>
<path d="M473.2 160.2L477.8 164.8" stroke="#666" stroke-width="1.5"/>
<path d="M293.8 190.8H304.2L299 197.2Z" fill="#3a3a3a"/>
<path d="M444 193.5L448.2 197.9L456.8 189.2" fill="none" stroke="#444" stroke-width="1.6"/>
<circle cx="484.3" cy="188.50" r="1.5" fill="#3a3a3a"/>
<circle cx="484.3" cy="193.65" r="1.5" fill="#3a3a3a"/>
<circle cx="484.3" cy="198.80" r="1.5" fill="#3a3a3a"/>
<path d="M320.6 245.5L328.8 253.7L320.6 261.9L312.40000000000003 253.7Z" fill="#94d3b1" stroke="#5aae80" stroke-width="1.1"/>
<circle cx="320.4" cy="287.9" r="7.2" fill="#7bc9a0" stroke="#5fb386" stroke-width="1"/>
<path d="M319.2 284.0V288.9H323.7" fill="none" stroke="#fff" stroke-width="1.4"/>
<path d="M320.5 332.29999999999995L314.6 323.7A7.1 7.1 0 1 1 326.4 323.7Z" fill="#82c9a5" stroke="#5bb386" stroke-width="1"/>
<circle cx="320.5" cy="319.9" r="4.3" fill="none" stroke="#5bb386" stroke-width="1"/>
<circle cx="320.5" cy="319.9" r="3.1" fill="#fff"/>
<path d="M320.6 346.9L328.8 355.09999999999997L320.6 363.29999999999995L312.40000000000003 355.09999999999997Z" fill="#94d3b1" stroke="#5aae80" stroke-width="1.1"/>
<path d="M320.6 380.7L328.8 388.9L320.6 397.09999999999997L312.40000000000003 388.9Z" fill="#94d3b1" stroke="#5aae80" stroke-width="1.1"/>
<path d="M320.6 414.5L328.8 422.7L320.6 430.9L312.40000000000003 422.7Z" fill="#94d3b1" stroke="#5aae80" stroke-width="1.1"/>
<path d="M320.6 448.3L328.8 456.5L320.6 464.7L312.40000000000003 456.5Z" fill="#94d3b1" stroke="#5aae80" stroke-width="1.1"/>
<path d="M320.6 482.09999999999997L328.8 490.29999999999995L320.6 498.49999999999994L312.40000000000003 490.29999999999995Z" fill="#94d3b1" stroke="#5aae80" stroke-width="1.1"/>
<circle cx="320.4" cy="524.4999999999999" r="7.2" fill="#7bc9a0" stroke="#5fb386" stroke-width="1"/>
<path d="M319.2 520.5999999999999V525.4999999999999H323.7" fill="none" stroke="#fff" stroke-width="1.4"/>
<path d="M320.6 549.6999999999999L328.8 557.9L320.6 566.1L312.40000000000003 557.9Z" fill="#94d3b1" stroke="#5aae80" stroke-width="1.1"/>
<path d="M320.6 583.5L328.8 591.7L320.6 599.9000000000001L312.40000000000003 591.7Z" fill="#94d3b1" stroke="#5aae80" stroke-width="1.1"/>
<path d="M320.6 617.3L328.8 625.5L320.6 633.7L312.40000000000003 625.5Z" fill="#94d3b1" stroke="#5aae80" stroke-width="1.1"/>
<path d="M320.6 651.0999999999999L328.8 659.3L320.6 667.5L312.40000000000003 659.3Z" fill="#94d3b1" stroke="#5aae80" stroke-width="1.1"/>
<path d="M320.6 684.8999999999999L328.8 693.0999999999999L320.6 701.3L312.40000000000003 693.0999999999999Z" fill="#94d3b1" stroke="#5aae80" stroke-width="1.1"/>
<path d="M320.6 718.6999999999998L328.8 726.8999999999999L320.6 735.0999999999999L312.40000000000003 726.8999999999999Z" fill="#94d3b1" stroke="#5aae80" stroke-width="1.1"/>
<path d="M320.6 752.4999999999999L328.8 760.6999999999999L320.6 768.9L312.40000000000003 760.6999999999999Z" fill="#94d3b1" stroke="#5aae80" stroke-width="1.1"/>
<path d="M320.5 805.5L314.6 796.9A7.1 7.1 0 1 1 326.4 796.9Z" fill="#82c9a5" stroke="#5bb386" stroke-width="1"/>
<circle cx="320.5" cy="793.1" r="4.3" fill="none" stroke="#5bb386" stroke-width="1"/>
<circle cx="320.5" cy="793.1" r="3.1" fill="#fff"/>
<path d="M320.6 820.0999999999999L328.8 828.3L320.6 836.5L312.40000000000003 828.3Z" fill="#94d3b1" stroke="#5aae80" stroke-width="1.1"/>
<path d="M320.6 853.8999999999999L328.8 862.0999999999999L320.6 870.3L312.40000000000003 862.0999999999999Z" fill="#94d3b1" stroke="#5aae80" stroke-width="1.1"/>
<path d="M320.5 906.8999999999999L314.6 898.2999999999998A7.1 7.1 0 1 1 326.4 898.2999999999998Z" fill="#82c9a5" stroke="#5bb386" stroke-width="1"/>
<circle cx="320.5" cy="894.4999999999999" r="4.3" fill="none" stroke="#5bb386" stroke-width="1"/>
<circle cx="320.5" cy="894.4999999999999" r="3.1" fill="#fff"/>
<g fill="none" stroke="#e09a48" stroke-width="1.2">
<rect x="313.5" y="922.5" width="8" height="16"/><rect x="321.5" y="926.3" width="3.8" height="12.2"/><rect x="325.3" y="930.3" width="3" height="8.2"/>
<path d="M315.5 926.3H320.5M317 930.4H320.5M315.5 934.5H320.5"/>
</g>
<path d="M513.8 125.8L515.2 120.8L523.6 112.4L527 115.8L518.6 124.2Z" fill="#444"/>
<path d="M524.5 111.5L525.7 110.3A1 1 0 0 1 527.1 110.3L528.5 111.7A1 1 0 0 1 528.5 113.1L527.3 114.3Z" fill="#444"/>
<path d="M608.5 111.8H621.3L616.2 118.3V124.6L613.6 122.4V118.3Z" fill="#8c8c8c"/>
<path fill-rule="evenodd" stroke="#8a8a8a" stroke-width="0.8" stroke-linejoin="round" d="M652.13 112.34L652.47 110.47L655.53 110.47L655.87 112.34L657.36 113.20L659.15 112.56L660.68 115.21L659.23 116.44L659.23 118.16L660.68 119.39L659.15 122.04L657.36 121.40L655.87 122.26L655.53 124.13L652.47 124.13L652.13 122.26L650.64 121.40L648.85 122.04L647.32 119.39L648.77 118.16L648.77 116.44L647.32 115.21L648.85 112.56L650.64 113.20ZM656.7 117.3A2.7 2.7 0 1 0 651.3 117.3A2.7 2.7 0 1 0 656.7 117.3Z" fill="#8a8a8a"/>
<circle cx="706.9" cy="156.90" r="1.5" fill="#3a3a3a"/>
<circle cx="706.9" cy="161.45" r="1.5" fill="#3a3a3a"/>
<circle cx="706.9" cy="166.00" r="1.5" fill="#3a3a3a"/>
<path d="M519.5 205.5V192.3H532.5" fill="none" stroke="#999" stroke-width="1.3"/>
<path d="M530.8 189.3L534.8 192.3L530.8 195.3M516.5 203.8L519.5 207L522.5 203.8" fill="none" stroke="#999" stroke-width="1.3"/>
<path d="M571.5 194V191.5H559.5L566 199L559.5 206.5H572V204" fill="none" stroke="#aaa" stroke-width="1.3"/>
<path d="M604.5 191.5L612.8 199.8L605.5 207.1H601.8L597 202.3A1 1 0 0 1 597 200.9Z" fill="none" stroke="#555" stroke-width="1.5"/>
<path d="M604.5 191.5L612.8 199.8L608 204.6L599.7 196.3Z" fill="#555"/>
<path d="M596 208.5H605.5" stroke="#555" stroke-width="1.4"/>
<path d="M636 189.2V212" stroke="#cfcfcf" stroke-width="1.2"/>
<g fill="none" stroke="#555" stroke-width="1.3">
<path d="M652.8 191.8H656.4M661.6 191.8H673.7M652.8 198.7H665.4M670.6 198.7H673.7M652.8 205.3H656.4M661.6 205.3H673.7"/>
<circle cx="659" cy="191.8" r="2.5" fill="#f9f9f9"/><circle cx="668" cy="198.7" r="2.5" fill="#f9f9f9"/><circle cx="659" cy="205.3" r="2.5" fill="#f9f9f9"/>
</g>
<path d="M546.5 272.5L552.8 276L546.5 279.5L540.2 276Z" fill="none" stroke="#4a84cc" stroke-width="1.1"/>
<path d="M542.6 277.8L540.2 279.2L546.5 282.8L552.8 279.2L550.4 277.8" fill="none" stroke="#4a84cc" stroke-width="1.1"/>
<path d="M534.9 404.4L529.0 395.8A7.1 7.1 0 1 1 540.8 395.8Z" fill="#82c9a5" stroke="#5bb386" stroke-width="1"/>
<circle cx="534.9" cy="392" r="4.3" fill="none" stroke="#5bb386" stroke-width="1"/>
<circle cx="534.9" cy="392" r="3.1" fill="#fff"/>
<path d="M535 474.5L543 482.5L535 490.5L527 482.5Z" fill="#94d3b1" stroke="#5aae80" stroke-width="1.1"/>
<path d="M535 561.5L543 569.5L535 577.5L527 569.5Z" fill="#94d3b1" stroke="#5aae80" stroke-width="1.1"/>
<g fill="none" stroke="#606060" stroke-width="2" stroke-dasharray="3.2 2.4">
<circle cx="818.1" cy="191.8" r="7.6" stroke-dasharray="3.6 2.37"/>
<path d="M855 195C852 189 857 184.5 862.5 184.5C868 184.5 870 189 869.5 193C869 197.5 864 199.5 859.5 198.5"/>
</g>
<path d="M851.5 196.5H855.3M851.5 199.2H855.3" stroke="#606060" stroke-width="1.8"/>
<circle cx="900.7" cy="188.3" r="4.2" fill="#5a5a5a"/>
<path d="M900.7 191V200.6M898.2 200.6H903.2" stroke="#5a5a5a" stroke-width="1.8"/>
<path d="M905.8 193.2L912.6 200M912.6 193.2L905.8 200" stroke="#5a5a5a" stroke-width="1.9"/>
<path d="M766.2 189V184.6H770.6M779.6 184.6H784V189M784 196.5V200.9H779.6M770.6 200.9H766.2V196.5M773.3 184.6H776.9M773.3 200.9H776.9M766.2 190.9V194.6M784 190.9V194.6" fill="none" stroke="#606060" stroke-width="2.1"/>
<circle cx="1180" cy="192.3" r="6.2" fill="none" stroke="#6a6a6a" stroke-width="1.4"/>
<path d="M1184.4 196.7L1189.3 201.6" stroke="#6a6a6a" stroke-width="1.5"/>
<path d="M1228.8 191L1226.6 192.3L1234.6 196.2L1242.6 192.3L1240.4 191" fill="none" stroke="#555" stroke-width="1.7"/>
<path d="M1228.8 194.7L1226.6 196L1234.6 199.9L1242.6 196L1240.4 194.7" fill="none" stroke="#555" stroke-width="1.7"/>
<path d="M1234.6 185L1242.6 188.7L1234.6 192.4L1226.6 188.7Z" fill="#eee" stroke="#555" stroke-width="1.7"/>
<path d="M1318.8 189.8L1323.45 196L1328.1 189.8L1323.45 192.6Z" fill="#8a8a8a"/>
<circle cx="1631.6" cy="124.5" r="1.3" fill="#333"/>
<circle cx="1631.6" cy="129.5" r="1.3" fill="#333"/>
<circle cx="1631.6" cy="134.5" r="1.3" fill="#333"/>
<path d="M1594.6 240H1606.6M1600.6 234V246" stroke="#555" stroke-width="1.3"/>
<path d="M1595.6 275.3H1605.6" stroke="#555" stroke-width="1.6"/>
<filter id="esh" x="-20%" y="-20%" width="140%" height="140%"><feGaussianBlur stdDeviation="1.6"/></filter>
<g filter="url(#esh)" fill="#555" opacity="0.75"><text x="1566" y="885.3" font-family="Liberation Sans" font-weight="bold" font-size="9">POWERED BY</text><circle cx="1635" cy="882.2" r="3.6"/><text x="1562" y="915.5" font-family="Liberation Sans" font-weight="bold" font-size="46" textLength="65" lengthAdjust="spacingAndGlyphs">esr</text><rect x="1631.5" y="891.2" width="6.6" height="24.3"/></g>
<g fill="#fff"><text x="1566" y="885.3" font-family="Liberation Sans" font-weight="bold" font-size="9">POWERED BY</text><circle cx="1635" cy="882.2" r="3.6"/><text x="1562" y="915.5" font-family="Liberation Sans" font-weight="bold" font-size="46" textLength="65" lengthAdjust="spacingAndGlyphs">esr</text><rect x="1631.5" y="891.2" width="6.6" height="24.3"/></g>
</svg>
<div class="t" style="left:15.7px;top:24.05px;font-size:15.3px;line-height:15.3px;color:#222;font-weight:normal;">File</div>
<div class="t" style="left:56.9px;top:24.05px;font-size:15.3px;line-height:15.3px;color:#222;font-weight:normal;">Insert</div>
<div class="t" style="left:114px;top:24.05px;font-size:15.3px;line-height:15.3px;color:#222;font-weight:normal;">Format</div>
<div class="t" style="left:180.8px;top:24.05px;font-size:15.3px;line-height:15.3px;color:#222;font-weight:normal;">Tools</div>
<div class="t" style="left:234.1px;top:24.05px;font-size:15.3px;line-height:15.3px;color:#222;font-weight:normal;">Share</div>
<div class="t" style="left:290.7px;top:24.05px;font-size:15.3px;line-height:15.3px;color:#222;font-weight:normal;">View</div>
<div class="t" style="left:342.1px;top:24.05px;font-size:15.3px;line-height:15.3px;color:#222;font-weight:normal;">Window</div>
<div class="t" style="left:417.1px;top:24.05px;font-size:15.3px;line-height:15.3px;color:#222;font-weight:normal;">Help</div>
<div class="t" style="left:781.5px;top:23.39px;font-size:15.6px;line-height:15.6px;color:#222;font-weight:normal;">Untitled Dossier</div>
<div class="t" style="left:93.7px;top:112.06px;font-size:12.8px;line-height:12.8px;color:#333;font-weight:bold;">CONTENTS</div>
<div class="t" style="left:178.5px;top:163.63px;font-size:12.6px;line-height:12.6px;color:#888;font-weight:normal;">1 Chapter</div>
<div class="t" style="left:178.5px;top:182.13px;font-size:12.6px;line-height:12.6px;color:#888;font-weight:normal;">1 Page</div>
<div class="t" style="left:87.5px;top:219.10px;font-size:15px;line-height:15px;color:#333;font-weight:bold;">Chapter 1</div>
<div class="t" style="left:87.5px;top:253.04px;font-size:14.6px;line-height:14.6px;color:#444;font-weight:normal;">Page 1</div>
<div class="t" style="left:320px;top:112.06px;font-size:12.8px;line-height:12.8px;color:#333;font-weight:bold;">DATASETS</div>
<div class="t" style="left:316px;top:149.15px;font-size:14px;line-height:14px;color:#444;font-weight:normal;">All</div>
<div class="t" style="left:314.3px;top:184.85px;font-size:15.3px;line-height:15.3px;color:#3a3a3a;font-weight:normal;">KPIs (store-per…</div>
<div class="t" style="left:313.8px;top:211.98px;font-size:14.2px;line-height:14.2px;color:#8a8a8a;font-weight:normal;">In memory</div>
<div class="t" style="left:336.5px;top:243.96px;font-size:15.4px;line-height:15.4px;color:#404040;font-weight:normal;">Aisle</div>
<div class="t" style="left:336.5px;top:277.76px;font-size:15.4px;line-height:15.4px;color:#404040;font-weight:normal;">Birthday</div>
<div class="t" style="left:336.5px;top:311.56px;font-size:15.4px;line-height:15.4px;color:#404040;font-weight:normal;">City</div>
<div class="t" style="left:336.5px;top:345.36px;font-size:15.4px;line-height:15.4px;color:#404040;font-weight:normal;">Department</div>
<div class="t" style="left:336.5px;top:379.16px;font-size:15.4px;line-height:15.4px;color:#404040;font-weight:normal;">E-mail</div>
<div class="t" style="left:336.5px;top:412.96px;font-size:15.4px;line-height:15.4px;color:#404040;font-weight:normal;">First Name</div>
<div class="t" style="left:336.5px;top:446.76px;font-size:15.4px;line-height:15.4px;color:#404040;font-weight:normal;">Item</div>
<div class="t" style="left:336.5px;top:480.56px;font-size:15.4px;line-height:15.4px;color:#404040;font-weight:normal;">Last Name</div>
<div class="t" style="left:336.5px;top:514.36px;font-size:15.4px;line-height:15.4px;color:#404040;font-weight:normal;">Month Start Date</div>
<div class="t" style="left:336.5px;top:548.16px;font-size:15.4px;line-height:15.4px;color:#404040;font-weight:normal;">Out of Stock</div>
<div class="t" style="left:336.5px;top:581.96px;font-size:15.4px;line-height:15.4px;color:#404040;font-weight:normal;">Peer Group</div>
<div class="t" style="left:336.5px;top:615.76px;font-size:15.4px;line-height:15.4px;color:#404040;font-weight:normal;">Performance Sc…</div>
<div class="t" style="left:336.5px;top:649.56px;font-size:15.4px;line-height:15.4px;color:#404040;font-weight:normal;">Phone Number</div>
<div class="t" style="left:336.5px;top:683.36px;font-size:15.4px;line-height:15.4px;color:#404040;font-weight:normal;">Region</div>
<div class="t" style="left:336.5px;top:717.16px;font-size:15.4px;line-height:15.4px;color:#404040;font-weight:normal;">Sales Tier</div>
<div class="t" style="left:336.5px;top:750.96px;font-size:15.4px;line-height:15.4px;color:#404040;font-weight:normal;">Shelf</div>
<div class="t" style="left:336.5px;top:784.76px;font-size:15.4px;line-height:15.4px;color:#404040;font-weight:normal;">State</div>
<div class="t" style="left:336.5px;top:818.56px;font-size:15.4px;line-height:15.4px;color:#404040;font-weight:normal;">Weeks of Supply</div>
<div class="t" style="left:336.5px;top:852.36px;font-size:15.4px;line-height:15.4px;color:#404040;font-weight:normal;">Year</div>
<div class="t" style="left:336.5px;top:886.16px;font-size:15.4px;line-height:15.4px;color:#404040;font-weight:normal;">Zip</div>
<div class="t" style="left:336.5px;top:919.96px;font-size:15.4px;line-height:15.4px;color:#404040;font-weight:normal;">% Sales Lift</div>
<div class="t" style="left:535.6px;top:111.45px;font-size:12.7px;line-height:12.7px;color:#333;font-weight:bold;">EDITOR</div>
<div class="t" style="left:515px;top:150.93px;font-size:15.2px;line-height:15.2px;color:#333;font-weight:normal;">Visualization 1</div>
<div class="t" style="left:518px;top:235.83px;font-size:12.6px;line-height:12.6px;color:#8c8c8c;font-weight:normal;">Layers</div>
<div class="t" style="left:563px;top:270.24px;font-size:14.6px;line-height:14.6px;color:#3b78c9;font-weight:normal;">Layer 1</div>
<div class="t" style="left:530.6px;top:304.64px;font-size:13.3px;line-height:13.3px;color:#2d6db5;font-weight:bold;">Add</div>
<div class="t" style="left:518px;top:359.33px;font-size:12.6px;line-height:12.6px;color:#8c8c8c;font-weight:normal;">Geo Attribute</div>
<div class="t" style="left:550.7px;top:386.96px;font-size:15.4px;line-height:15.4px;color:#4a9a6d;font-weight:normal;">State</div>
<div class="t" style="left:518px;top:446.33px;font-size:12.6px;line-height:12.6px;color:#8c8c8c;font-weight:normal;">Latitude</div>
<div class="t" style="left:550.7px;top:474.46px;font-size:15.4px;line-height:15.4px;color:#4a9a6d;font-weight:normal;">State@Latitude</div>
<div class="t" style="left:518px;top:533.33px;font-size:12.6px;line-height:12.6px;color:#8c8c8c;font-weight:normal;">Longitude</div>
<div class="t" style="left:550.7px;top:561.46px;font-size:15.4px;line-height:15.4px;color:#4a9a6d;font-weight:normal;">State@Longitude</div>
<div class="t" style="left:518px;top:620.33px;font-size:12.6px;line-height:12.6px;color:#8c8c8c;font-weight:normal;">Color By</div>
<div class="t" style="left:518px;top:708.83px;font-size:12.6px;line-height:12.6px;color:#8c8c8c;font-weight:normal;">Tooltip</div>
<div class="t" style="left:1114px;top:131.03px;font-size:24.3px;line-height:24.3px;color:#3a3a3a;font-weight:normal;letter-spacing:0.12px">Visualization 1</div>
<div class="t" style="left:948.5px;top:185.63px;font-size:17.8px;line-height:17.8px;color:#6e6e6e;font-weight:normal;">Search...</div>
<div class="t" style="left:1261.3px;top:185.60px;font-size:13px;line-height:13px;color:#444;font-weight:bold;letter-spacing:0px">STYLES</div>
<div class="t" style="left:1298.5px;top:901.58px;font-size:16.8px;line-height:16.8px;color:#222;font-weight:normal;">Esri, HERE, Garmin, USGS, EPA</div>
<div id="win"></div>
</body></html>
